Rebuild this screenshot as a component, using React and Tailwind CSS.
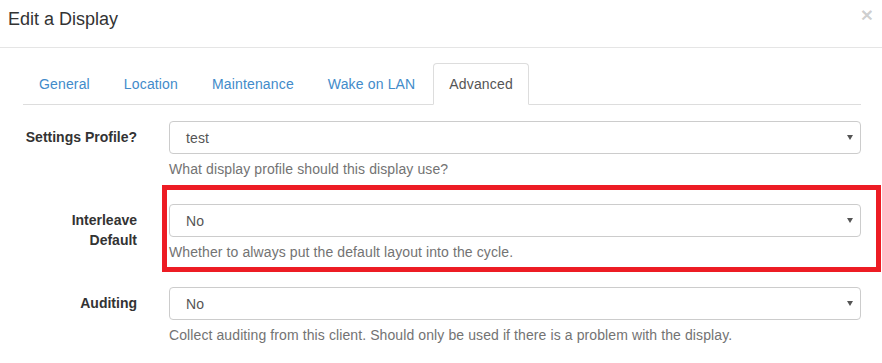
import React from "react";

const tabs = ["General", "Location", "Maintenance", "Wake on LAN", "Advanced"];

const fields = [
  { label: ["Settings Profile?"], value: "test", help: "What display profile should this display use?" },
  { label: ["Interleave", "Default"], value: "No", help: "Whether to always put the default layout into the cycle." },
  {
    label: ["Auditing"],
    value: "No",
    help: "Collect auditing from this client. Should only be used if there is a problem with the display.",
  },
];

const SelectBox = ({ value }) => (
  <div className="flex items-center justify-between h-[33px] border border-[#ccc] rounded-[4px] pl-[16px] pr-[7px] text-[#555] bg-white tracking-[0.1px]">
    <span>{value}</span>
    <svg width="6" height="5" viewBox="0 0 6 5">
      <path d="M0 0 L6 0 L3 5 Z" fill="#555" />
    </svg>
  </div>
);

const App = () => {
  return (
    <div
      className="relative w-[882px] h-[363px] bg-white overflow-hidden text-[14px] leading-[20px] text-[#333]"
      style={{ fontFamily: '"Liberation Sans", Arial, sans-serif' }}
    >
      {/* Header */}
      <div className="flex justify-between h-[48px] border-b border-[#e5e5e5] pl-[8px] pr-[9px] pt-[6px]">
        <h4 className="text-[18px] leading-[26px] text-[#333]">Edit a Display</h4>
        <span className="text-[21px] leading-[21px] font-bold text-black/20 mt-[-2px]">×</span>
      </div>

      {/* Tabs */}
      <div className="ml-[23px] w-[838px] mt-[15px] flex border-b border-[#ddd] tracking-[0.15px]">
        {tabs.map((t) => (
          <div
            key={t}
            className={
              t === "Advanced"
                ? "px-[15px] py-[10px] mr-[2px] mb-[-1px] border border-[#ddd] border-b-white rounded-t-[4px] bg-white text-[#555]"
                : "px-[15px] py-[10px] mr-[2px] mb-[-1px] border border-transparent text-[#428bca]"
            }
          >
            {t}
          </div>
        ))}
      </div>

      {/* Form */}
      <div className="mt-[16px]">
        {fields.map((f, i) => (
          <div key={i} className="flex mb-[25px]">
            <div className="w-[153px] pr-[16px] pt-[6px] text-right font-bold">
              {f.label.map((l) => (
                <div key={l}>{l}</div>
              ))}
            </div>
            <div className="ml-[16px] w-[692px]">
              <SelectBox value={f.value} />
              <p className="mt-[5px] text-[#737373] tracking-[0.1px]">{f.help}</p>
            </div>
          </div>
        ))}
      </div>

      {/* Annotation highlight */}
      <div className="absolute left-[162px] top-[185px] w-[719px] h-[87px] border-[5px] border-[#ed1c24]" />
    </div>
  );
};

export default App;
